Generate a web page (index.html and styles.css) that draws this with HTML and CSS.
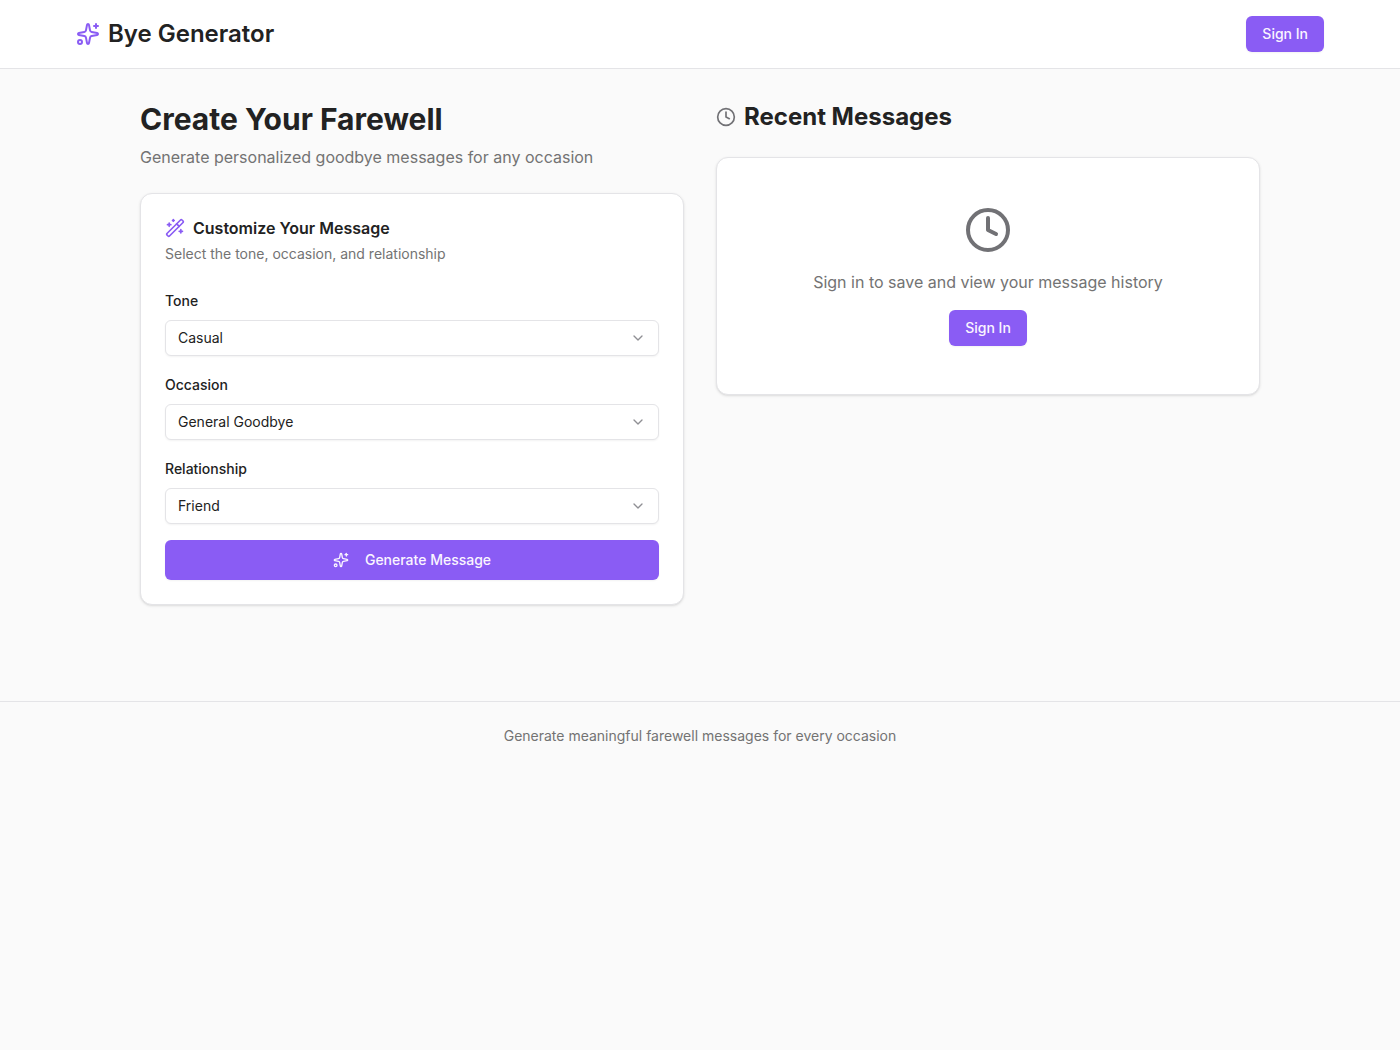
FILE: index.html
```html
<!DOCTYPE html>
<html lang="en">
<head>
  <meta charset="UTF-8" />
  <meta name="viewport" content="width=device-width, initial-scale=1" />
  <title>Bye Generator</title>
  <link rel="stylesheet" href="styles.css">
</head>
<body>

  <!-- shared icons -->
  <svg class="sprite" aria-hidden="true">
    <symbol id="icon-sparkles" viewBox="0 0 24 24">
      <path d="M11.017 2.814a1 1 0 0 1 1.966 0l1.051 5.558a2 2 0 0 0 1.594 1.594l5.558 1.051a1 1 0 0 1 0 1.966l-5.558 1.051a2 2 0 0 0-1.594 1.594l-1.051 5.558a1 1 0 0 1-1.966 0l-1.051-5.558a2 2 0 0 0-1.594-1.594l-5.558-1.051a1 1 0 0 1 0-1.966l5.558-1.051a2 2 0 0 0 1.594-1.594z" />
      <path d="M20 2v4" />
      <path d="M22 4h-4" />
      <circle cx="4" cy="20" r="2" />
    </symbol>
    <symbol id="icon-wand" viewBox="0 0 24 24">
      <path d="m21.64 3.64-1.28-1.28a1.21 1.21 0 0 0-1.72 0L2.36 18.64a1.21 1.21 0 0 0 0 1.72l1.28 1.28a1.2 1.2 0 0 0 1.72 0L21.64 5.36a1.2 1.2 0 0 0 0-1.72" />
      <path d="m14 7 3 3" />
      <path d="M5 6v4" />
      <path d="M19 14v4" />
      <path d="M10 2v2" />
      <path d="M7 8H3" />
      <path d="M21 16h-4" />
      <path d="M11 3H9" />
    </symbol>
    <symbol id="icon-clock" viewBox="0 0 24 24">
      <circle cx="12" cy="12" r="10" />
      <path d="M12 6v6l4 2" />
    </symbol>
    <symbol id="icon-chevron" viewBox="0 0 24 24">
      <path d="m6 9 6 6 6-6" />
    </symbol>
  </svg>

  <header class="site-header">
    <div class="header-inner">
      <div class="brand">
        <svg class="icon icon-lg accent"><use href="#icon-sparkles" /></svg>
        <h1>Bye Generator</h1>
      </div>
      <button class="btn" type="button">Sign In</button>
    </div>
  </header>

  <main class="main">
    <section class="create">
      <div class="intro">
        <h2>Create Your Farewell</h2>
        <p>Generate personalized goodbye messages for any occasion</p>
      </div>

      <form class="card form-card">
        <div class="card-header">
          <h3 class="card-title">
            <svg class="icon icon-md accent"><use href="#icon-wand" /></svg>
            Customize Your Message
          </h3>
          <p class="card-desc">Select the tone, occasion, and relationship</p>
        </div>

        <div class="fields">
          <div class="field">
            <label for="tone">Tone</label>
            <div class="select-wrap">
              <select id="tone">
                <option>Casual</option>
              </select>
              <svg class="icon icon-sm chevron"><use href="#icon-chevron" /></svg>
            </div>
          </div>
          <div class="field">
            <label for="occasion">Occasion</label>
            <div class="select-wrap">
              <select id="occasion">
                <option>General Goodbye</option>
              </select>
              <svg class="icon icon-sm chevron"><use href="#icon-chevron" /></svg>
            </div>
          </div>
          <div class="field">
            <label for="relationship">Relationship</label>
            <div class="select-wrap">
              <select id="relationship">
                <option>Friend</option>
              </select>
              <svg class="icon icon-sm chevron"><use href="#icon-chevron" /></svg>
            </div>
          </div>
          <button class="btn btn-generate" type="button">
            <svg class="icon icon-sm"><use href="#icon-sparkles" /></svg>
            Generate Message
          </button>
        </div>
      </form>
    </section>

    <section class="recent">
      <h2 class="recent-title">
        <svg class="icon icon-md muted"><use href="#icon-clock" /></svg>
        Recent Messages
      </h2>
      <div class="card empty-card">
        <svg class="icon icon-xl muted"><use href="#icon-clock" /></svg>
        <p>Sign in to save and view your message history</p>
        <button class="btn" type="button">Sign In</button>
      </div>
    </section>
  </main>

  <footer class="site-footer">
    <p>Generate meaningful farewell messages for every occasion</p>
  </footer>

</body>
</html>
```
FILE: styles.css
```css
* { margin:0; padding:0; box-sizing:border-box; }
body { font-family:Inter,"Liberation Sans",sans-serif; font-size:16px; line-height:24px; color:#222; background:#fafafa; }
button, select { font:inherit; }

.sprite { position:absolute; width:0; height:0; }
.icon { flex-shrink:0; fill:none; stroke:currentColor; stroke-width:2; stroke-linecap:round; stroke-linejoin:round; }
.icon-sm { width:16px; height:16px; }
.icon-md { width:20px; height:20px; }
.icon-lg { width:24px; height:24px; }
.icon-xl { width:48px; height:48px; }
.accent { color:#8a5cf4; }
.muted { color:#717175; }

.btn { display:inline-flex; align-items:center; justify-content:center; height:36px; padding:0 16px; border:none; border-radius:6px; background:#8a5cf4; color:#faf5ff; font-size:14px; font-weight:500; line-height:20px; box-shadow:0 1px 2px rgba(0,0,0,0.05); cursor:pointer; }
.btn:hover { background:#7c4df0; }
.btn-generate { width:100%; height:40px; gap:16px; }

/* header */
.site-header { background:#fff; border-bottom:1px solid #e4e4e7; }
.header-inner { display:flex; align-items:center; justify-content:space-between; max-width:1280px; margin:0 auto; padding:16px; }
.brand { display:flex; align-items:center; gap:8px; }
.brand h1 { font-size:24px; line-height:32px; font-weight:600; }

/* content */
.main { display:grid; grid-template-columns:1fr 1fr; align-items:start; gap:32px; max-width:1152px; margin:0 auto 64px; padding:32px 16px; }
.create, .recent { display:flex; flex-direction:column; gap:24px; }
.intro h2 { font-size:30px; line-height:36px; font-weight:700; margin-bottom:8px; }
.intro p { color:#737373; }
.recent-title { display:flex; align-items:center; gap:8px; font-size:24px; line-height:32px; font-weight:700; }

.card { background:#fff; border:1px solid #e4e4e7; border-radius:12px; box-shadow:0 1px 3px rgba(0,0,0,0.1),0 1px 2px -1px rgba(0,0,0,0.1); }
.form-card { display:flex; flex-direction:column; gap:24px; padding:24px; }
.card-header { display:flex; flex-direction:column; gap:6px; }
.card-title { display:flex; align-items:center; gap:8px; font-size:16px; line-height:20px; font-weight:600; }
.card-desc { font-size:14px; line-height:20px; color:#737373; }

.fields { display:flex; flex-direction:column; gap:16px; }
.field label { font-size:14px; line-height:20px; font-weight:500; }
.select-wrap { position:relative; display:flex; margin-top:8px; }
.select-wrap select { appearance:none; width:100%; height:36px; padding:0 36px 0 12px; border:1px solid #e4e4e7; border-radius:6px; background:#fff; color:inherit; font-size:14px; box-shadow:0 1px 2px rgba(0,0,0,0.05); }
.chevron { position:absolute; top:10px; right:13px; color:#8f8f94; pointer-events:none; }

.empty-card { display:flex; flex-direction:column; align-items:center; gap:16px; padding:48px 24px; text-align:center; }
.empty-card p { color:#737373; }

/* footer */
.site-footer { border-top:1px solid #e4e4e7; padding:24px 16px; text-align:center; font-size:14px; line-height:20px; color:#737373; }

@media (max-width:900px) {
  .main { grid-template-columns:1fr; }
}
```
